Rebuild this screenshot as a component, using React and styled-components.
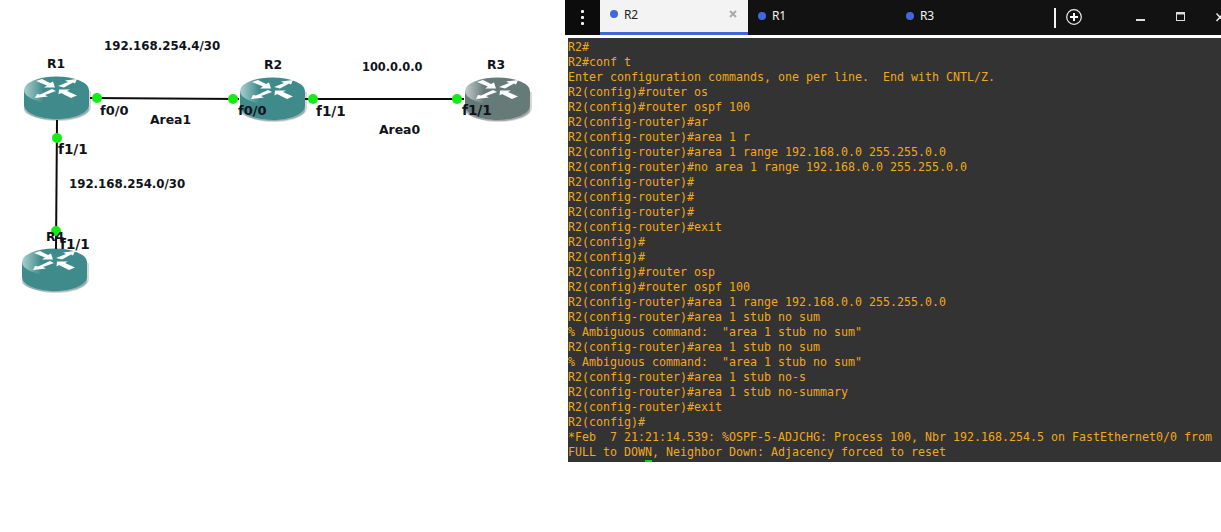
import React from "react";
import styled, { createGlobalStyle } from "styled-components";

const Global = createGlobalStyle`
  html, body { margin: 0; padding: 0; background: #fff; }
  #root { width: 1221px; height: 532px; overflow: hidden; }
`;

const Page = styled.div`
  display: flex;
  width: 1221px;
  height: 532px;
  overflow: hidden;
  background: #fff;
`;

const Canvas = styled.div`
  position: relative;
  flex: 0 0 565px;
  height: 532px;
`;

const Links = styled.svg`
  position: absolute;
  left: 0;
  top: 0;
`;

const Label = styled.span`
  position: absolute;
  left: ${(p) => p.$x}px;
  top: ${(p) => p.$y}px;
  font-family: "DejaVu Sans", sans-serif;
  font-weight: 700;
  font-size: ${(p) => p.$size}px;
  line-height: 15px;
  color: #10131a;
  white-space: nowrap;
`;

const RouterBox = styled.svg`
  position: absolute;
  left: ${(p) => p.$x}px;
  top: ${(p) => p.$y}px;
`;

const Console = styled.div`
  flex: 0 0 656px;
  display: flex;
  flex-direction: column;
  height: 462px;
  overflow: hidden;
`;

const TabBar = styled.div`
  display: flex;
  align-items: stretch;
  height: 35px;
  background: #121212;
  flex: none;
  overflow: hidden;
`;

const MenuButton = styled.div`
  flex: 0 0 35px;
  box-sizing: border-box;
  display: flex;
  flex-direction: column;
  align-items: center;
  justify-content: center;
  gap: 3px;
  background: #0c0c0c;
  padding-right: 1px;
  & > i {
    width: 3px;
    height: 3px;
    background: #f2f2f2;
    border-radius: 1px;
  }
`;

const Tab = styled.div`
  flex: 0 0 148px;
  box-sizing: border-box;
  display: flex;
  align-items: center;
  gap: 6px;
  padding: 0 11px 4px 10px;
  font-family: "Noto Sans", sans-serif;
  font-size: 12px;
  letter-spacing: -0.3px;
  color: ${(p) => (p.$active ? "#222" : "#f2f2f2")};
  background: ${(p) => (p.$active ? "#f3f3f3" : "transparent")};
  border-bottom: ${(p) => (p.$active ? "3px solid #3f67d8" : "0")};
`;

const Dot = styled.span`
  width: 8px;
  height: 8px;
  border-radius: 50%;
  background: #3f67e0;
  flex: none;
`;

const TabName = styled.span`
  flex: 1;
`;

const CloseX = styled.svg`
  flex: none;
`;

const Divider = styled.div`
  width: 2px;
  height: 20px;
  background: #f2f2f2;
  margin: 8px 10px 0 10px;
  flex: none;
`;

const WinIcon = styled.svg`
  flex: none;
  margin: ${(p) => p.$m};
`;

const Gap = styled.div`
  height: 3px;
  background: #fff;
  flex: none;
`;

const Terminal = styled.pre`
  flex: 1;
  margin: 0 0 0 3px;
  padding: 2px 0 0 0;
  background: #333333;
  position: relative;
  font-family: "DejaVu Sans Mono", monospace;
  font-size: 11.63px;
  line-height: 15px;
  color: #f0a81c;
  overflow: hidden;
  white-space: pre;
`;

const Cursor = styled.span`
  position: absolute;
  left: 77px;
  bottom: 0;
  width: 7px;
  height: 2px;
  background: #00e000;
`;

const Router = ({ x, y, id, top = "#3f8a8a", edge = "#2f6f70", light = "#a9cfcf" }) => (
  <RouterBox $x={x} $y={y} width="70" height="48" viewBox="0 0 70 48">
    <defs>
      <linearGradient id={id} x1="0" y1="0" x2="1" y2="0">
        <stop offset="0" stopColor={light} />
        <stop offset="0.3" stopColor={top} />
        <stop offset="1" stopColor={top} />
      </linearGradient>
    </defs>
    <path d="M2 15 V31 C2 39 17 45 35 45 C53 45 68 39 68 31 V15 Z" fill="#c8c8c8" opacity="0.7" />
    <path d="M1 14 V29 C1 37 16 43 34 43 C51 43 66 37 66 29 V14 Z" fill={top} />
    <path d="M1 29 C1 37 16 43 34 43 C51 43 66 37 66 29 V33 C66 39 51 44 34 44 C16 44 1 39 1 33 Z" fill={edge} opacity="0.4" />
    <ellipse cx="33.5" cy="14" rx="32.5" ry="13.5" fill={`url(#${id})`} />
    <g fill="#ffffff">
      <path d="M13 5 L19 3 L27 7 L30 5.5 L32 11.5 L21 11.5 L24 9.5 Z" />
      <path d="M35 10 L45 6 L42 4.5 L54 3 L52 7.5 L50 6.5 L41 11.5 Z" />
      <path d="M29 13 L33 15 L22 19 L25 20.5 L12 22 L14 18 L17 18.5 Z" />
      <path d="M36 13.5 L47 13.5 L44 15 L54 19.5 L48 22 L38 17 L35.5 18.5 Z" />
    </g>
  </RouterBox>
);

const lines = `R2#
R2#conf t
Enter configuration commands, one per line.  End with CNTL/Z.
R2(config)#router os
R2(config)#router ospf 100
R2(config-router)#ar
R2(config-router)#area 1 r
R2(config-router)#area 1 range 192.168.0.0 255.255.0.0
R2(config-router)#no area 1 range 192.168.0.0 255.255.0.0
R2(config-router)#
R2(config-router)#
R2(config-router)#
R2(config-router)#exit
R2(config)#
R2(config)#
R2(config)#router osp
R2(config)#router ospf 100
R2(config-router)#area 1 range 192.168.0.0 255.255.0.0
R2(config-router)#area 1 stub no sum
% Ambiguous command:  "area 1 stub no sum"
R2(config-router)#area 1 stub no sum
% Ambiguous command:  "area 1 stub no sum"
R2(config-router)#area 1 stub no-s
R2(config-router)#area 1 stub no-summary
R2(config-router)#exit
R2(config)#
*Feb  7 21:21:14.539: %OSPF-5-ADJCHG: Process 100, Nbr 192.168.254.5 on FastEthernet0/0 from
FULL to DOWN, Neighbor Down: Adjacency forced to reset`;

const dots = [
  [97, 98], [233, 99], [313, 99], [457, 99], [57, 138], [56, 231],
];

const labels = [
  ["R1", 47, 56, 12.4], ["R2", 264, 57, 12.4], ["R3", 487, 57, 12.4], ["R4", 46, 229, 12.4],
  ["192.168.254.4/30", 104, 39, 11.8], ["192.168.254.0/30", 69, 177, 11.8], ["100.0.0.0", 362, 60, 11.4],
  ["Area1", 150, 112, 12.4], ["Area0", 379, 122, 12.4],
  ["f0/0", 100, 103, 13], ["f0/0", 238, 103, 13], ["f1/1", 316, 104, 13.6], ["f1/1", 462, 103, 13.6],
  ["f1/1", 58, 142, 13.6], ["f1/1", 60, 237, 13.6],
];

export default function App() {
  return (
    <Page>
      <Global />
      <Canvas>
        <Router x={23} y={76} id="g1" />
        <Router x={239} y={77} id="g2" />
        <Router x={464} y={77} id="g3" top="#667a78" edge="#4d5c5b" light="#c2cccb" />
        <Router x={21} y={248} id="g4" />
        <Links width="565" height="532" viewBox="0 0 565 532">
          <g stroke="#0c0c0c" strokeWidth="2" fill="none">
            <path d="M90 98 L239 99" />
            <path d="M305 99 L464 99" />
            <path d="M57 120 L56 249" />
          </g>
          {dots.map(([cx, cy]) => (
            <circle key={`${cx}-${cy}`} cx={cx} cy={cy} r="5" fill="#12ee12" />
          ))}
        </Links>
        {labels.map(([t, x, y, size]) => (
          <Label key={`${t}-${x}`} $x={x} $y={y} $size={size}>{t}</Label>
        ))}
      </Canvas>
      <Console>
        <TabBar>
          <MenuButton><i /><i /><i /></MenuButton>
          <Tab $active>
            <Dot />
            <TabName>R2</TabName>
            <CloseX width="8" height="8" viewBox="0 0 8 8">
              <path d="M1 1 L7 7 M7 1 L1 7" stroke="#aaa" strokeWidth="2" />
            </CloseX>
          </Tab>
          <Tab><Dot /><TabName>R1</TabName></Tab>
          <Tab><Dot /><TabName>R3</TabName></Tab>
          <Divider />
          <WinIcon $m="9px 0 0 0" width="16" height="16" viewBox="0 0 16 16">
            <circle cx="8" cy="8" r="7.3" fill="none" stroke="#eee" strokeWidth="1.2" />
            <path d="M8 4 V12 M4 8 H12" stroke="#fff" strokeWidth="2" />
          </WinIcon>
          <WinIcon $m="19px 0 0 54px" width="10" height="3" viewBox="0 0 10 3">
            <rect width="9" height="2" fill="#ddd" />
          </WinIcon>
          <WinIcon $m="12px 0 0 30px" width="9" height="10" viewBox="0 0 9 10">
            <rect x="0.5" y="0.5" width="8" height="8" fill="none" stroke="#ddd" />
            <rect width="9" height="2.5" fill="#ddd" />
          </WinIcon>
          <WinIcon $m="13px 0 0 31px" width="8" height="9" viewBox="0 0 8 9">
            <path d="M0.5 0.5 L7.5 8 M7.5 0.5 L0.5 8" stroke="#eee" strokeWidth="1.5" />
          </WinIcon>
        </TabBar>
        <Gap />
        <Terminal>
          {lines}
          <Cursor />
        </Terminal>
      </Console>
    </Page>
  );
}
